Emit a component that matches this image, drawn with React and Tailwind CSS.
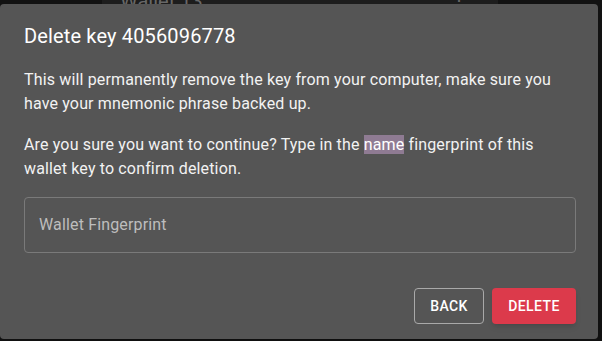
import React from 'react'

export default function App() {
  return (
    <div className="relative w-[602px] h-[341px] overflow-hidden bg-[#131313] font-['Roboto',sans-serif]">
      {/* Page behind the backdrop */}
      <div className="ml-[102px] w-[396px] h-[60px] bg-[#1e1e1e] flex items-start justify-between px-[18px] -mt-[14px]">
        <span className="text-[20px] text-[#6a6a6a]">Wallet 13</span>
        <span className="text-[#6a6a6a] text-[18px] mr-[12px]">⋮</span>
      </div>

      {/* Dialog */}
      <div className="absolute top-[4px] left-0 w-[598px] h-[335px] bg-[#555555] rounded-[4px] shadow-2xl flex flex-col text-[#f2f2f2]">
        <h2 className="pl-6 pr-[22px] pt-4 text-[20px] leading-8 font-normal tracking-[0.15px] text-white">Delete key 4056096778</h2>
        <div className="pl-6 pr-[22px] pt-[16px] text-[16px] leading-6 tracking-[0.15px]">
          <p>This will permanently remove the key from your computer, make sure you have your mnemonic phrase backed up.</p>
          <p className="mt-[17px]">
            Are you sure you want to continue? Type in the <span className="bg-[#8f7b93] text-white">name</span> fingerprint of this wallet key to confirm deletion.
          </p>
          <div className="mt-[16px] h-[56px] rounded-[4px] border border-[#7a7a7a] flex items-center px-[14px]">
            <span className="text-[#bdbdbd] text-[16px]">Wallet Fingerprint</span>
          </div>
        </div>
        <div className="mt-auto flex justify-end gap-2 pl-6 pr-[22px] pb-[15px]">
          <button className="h-9 w-[70px] rounded-[4px] border border-[#a9a9a9] text-[14px] font-medium tracking-[0.4px] text-white">BACK</button>
          <button className="h-9 w-[84px] rounded-[4px] bg-[#dc3a4b] text-[14px] font-medium tracking-[0.4px] text-white shadow-md">DELETE</button>
        </div>
      </div>
    </div>
  )
}
